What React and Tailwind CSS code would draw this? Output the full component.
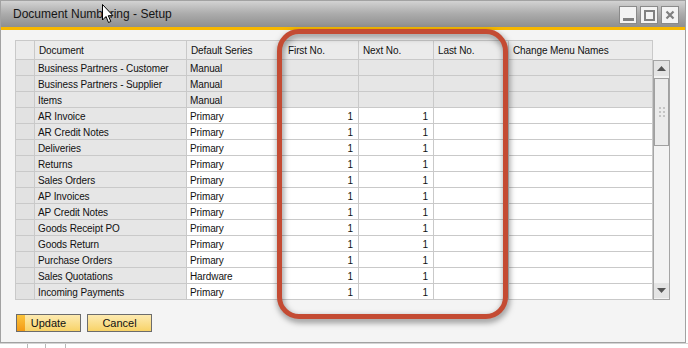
import React from 'react'

const rows = [
  ['Business Partners - Customer', 'Manual', false],
  ['Business Partners - Supplier', 'Manual', false],
  ['Items', 'Manual', false],
  ['AR Invoice', 'Primary', true],
  ['AR Credit Notes', 'Primary', true],
  ['Deliveries', 'Primary', true],
  ['Returns', 'Primary', true],
  ['Sales Orders', 'Primary', true],
  ['AP Invoices', 'Primary', true],
  ['AP Credit Notes', 'Primary', true],
  ['Goods Receipt PO', 'Primary', true],
  ['Goods Return', 'Primary', true],
  ['Purchase Orders', 'Primary', true],
  ['Sales Quotations', 'Hardware', true],
  ['Incoming Payments', 'Primary', true],
]

const cell = 'h-[16px] pt-[1px] border-r border-b border-[#c9c9c9] flex items-center overflow-hidden whitespace-nowrap'
const head = 'h-[20px] border-r border-b border-t border-[#c9c9c9] flex items-center pl-[4px] bg-[#ebebeb] whitespace-nowrap'

function TitleButton({ children }) {
  return (
    <div className="w-[18px] h-[18px] border border-[#8a8a8a] bg-[#f3f3f3] flex items-center justify-center">
      {children}
    </div>
  )
}

function Row({ doc, series, editable }) {
  const g = editable ? 'bg-white' : 'bg-[#e6e6e6]'
  return (
    <div className="flex">
      <div className={`${cell} w-[20px] bg-[#e2e2e2] border-l`} />
      <div className={`${cell} w-[152px] bg-[#e6e6e6] pl-[3px]`}>{doc}</div>
      <div className={`${cell} w-[95px] ${g} pl-[3px]`}>{series}</div>
      <div className={`${cell} w-[77px] ${g} justify-end pr-[5px]`}>{editable ? '1' : ''}</div>
      <div className={`${cell} w-[75px] ${g} justify-end pr-[5px]`}>{editable ? '1' : ''}</div>
      <div className={`${cell} w-[75px] ${g}`} />
      <div className={`${cell} w-[144px] ${g}`} />
    </div>
  )
}

function Button({ label, focused }) {
  return (
    <div className="relative w-[65px] h-[18px] border border-[#6c6c6c] bg-gradient-to-b from-[#fdeab0] to-[#f8d366] flex items-center justify-center text-[11px] text-[#111]">
      {focused && (
        <div className="absolute left-0 top-0 bottom-0 w-[8px] bg-gradient-to-b from-[#fbc43a] to-[#f39a14]" />
      )}
      <span className="relative">{label}</span>
    </div>
  )
}

export default function App() {
  return (
    <div className="relative w-[688px] h-[348px] bg-white overflow-hidden" style={{ fontFamily: '"Liberation Sans", Arial, sans-serif' }}>
      <div className="w-[686px] h-[343px] border border-[#a2a2a2] flex flex-col bg-[#f4f4f4]">
        {/* Title bar */}
        <div className="h-[26px] bg-gradient-to-b from-[#d3d3d3] via-[#ababab] to-[#8f8f8f] flex items-center pl-[12px] pr-[6px]">
          <span className="text-[12px] text-[#151515] flex-1">Document Numbering - Setup</span>
          <div className="flex gap-[3px] mt-[2px]">
            <TitleButton>
              <div className="w-[11px] h-[3px] bg-[#808080] mt-[8px]" />
            </TitleButton>
            <TitleButton>
              <div className="w-[11px] h-[11px] border-[2px] border-[#808080]" />
            </TitleButton>
            <TitleButton>
              <svg width="10" height="10" viewBox="0 0 10 10">
                <path d="M1.5 1.5 L8.5 8.5 M8.5 1.5 L1.5 8.5" stroke="#808080" strokeWidth="2.2" />
              </svg>
            </TitleButton>
          </div>
        </div>
        <div className="h-[3px] bg-[#f7b800]" />

        {/* Body */}
        <div className="flex-1 pl-[14px] pt-[10px] text-[10px] tracking-[-0.1px] text-[#111]">
          <div className="flex">
            <div className="flex flex-col">
              <div className="flex">
                <div className={`${head} w-[20px] border-l`} />
                <div className={`${head} w-[152px]`}>Document</div>
                <div className={`${head} w-[95px]`}>Default Series</div>
                <div className={`${head} w-[77px] pl-[6px]`}>First No.</div>
                <div className={`${head} w-[75px]`}>Next No.</div>
                <div className={`${head} w-[75px]`}>Last No.</div>
                <div className={`${head} w-[144px]`}>Change Menu Names</div>
              </div>
              {rows.map(([doc, series, editable]) => (
                <Row key={doc} doc={doc} series={series} editable={editable} />
              ))}
            </div>

            {/* Scrollbar */}
            <div className="mt-[20px] w-[17px] h-[240px] border border-[#a5a5a5] bg-[#f3f3f3] flex flex-col items-center">
              <div className="w-[15px] h-[15px] bg-[#e4e4e4] flex items-center justify-center">
                <svg width="9" height="5" viewBox="0 0 9 5"><path d="M0 5 L4.5 0 L9 5 Z" fill="#555" /></svg>
              </div>
              <div className="mt-[2px] w-[15px] h-[68px] border border-[#a0a0a0] bg-[#ebebeb] flex items-center justify-center">
                <div className="grid grid-cols-2 gap-[2px]">
                  {[0, 1, 2, 3, 4, 5].map(i => (
                    <div key={i} className="w-[2px] h-[2px] bg-[#c4c4c4]" />
                  ))}
                </div>
              </div>
              <div className="flex-1" />
              <div className="w-[15px] h-[15px] mb-[1px] bg-[#e4e4e4] flex items-center justify-center">
                <svg width="9" height="5" viewBox="0 0 9 5"><path d="M0 0 L4.5 5 L9 0 Z" fill="#555" /></svg>
              </div>
            </div>
          </div>

          {/* Buttons */}
          <div className="flex gap-[6px] mt-[14px] ml-[1px] tracking-normal">
            <Button label="Update" focused />
            <Button label="Cancel" />
          </div>
        </div>
      </div>

      {/* Bottom strip remnants */}
      <div className="flex h-[5px] border-t border-[#d4d4d4]">
        <div className="w-[27px]" />
        <div className="w-[1px] bg-[#b8b8b8]" />
        <div className="w-[17px]" />
        <div className="w-[1px] bg-[#b8b8b8]" />
        <div className="w-[19px]" />
        <div className="w-[1px] bg-[#b8b8b8]" />
      </div>

      {/* Red annotation frame */}
      <div className="absolute left-[277px] top-[29px] w-[231px] h-[290px] rounded-[22px] border-[5px] border-[#c44b33] drop-shadow-[1px_3px_3px_rgba(0,0,0,0.5)]" />

      {/* Mouse cursor */}
      <svg className="absolute left-[102px] top-[4px]" width="13" height="20" viewBox="0 0 13 20">
        <path d="M0.5 0.5 L0.5 16 L4 12.5 L6.5 18.5 L8.8 17.5 L6.3 11.7 L11 11.7 Z" fill="#fff" stroke="#000" strokeWidth="1" />
      </svg>
    </div>
  )
}
